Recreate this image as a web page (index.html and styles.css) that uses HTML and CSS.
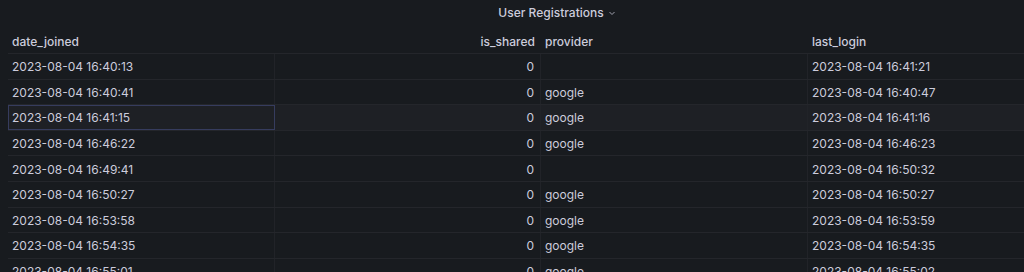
FILE: index.html
```html
<!DOCTYPE html>
<html lang="en">
<head>
    <meta charset="UTF-8">
    <title>User Registrations</title>
    <link rel="stylesheet" href="styles.css">
</head>
<body>
    <div class="panel">
        <div class="panel-title">
            <span>User Registrations</span>
            <svg class="chevron" width="8" height="8" viewBox="0 0 8 8"><path d="M1.5 3 L4 5.5 L6.5 3" fill="none" stroke="#9fa0ad" stroke-width="1"/></svg>
        </div>
        <div class="table">
            <div class="row head">
                <div class="cell">date_joined</div>
                <div class="cell num">is_shared</div>
                <div class="cell">provider</div>
                <div class="cell">last_login</div>
            </div>
            <div class="row">
                <div class="cell">2023-08-04 16:40:13</div>
                <div class="cell num">0</div>
                <div class="cell"></div>
                <div class="cell">2023-08-04 16:41:21</div>
            </div>
            <div class="row">
                <div class="cell">2023-08-04 16:40:41</div>
                <div class="cell num">0</div>
                <div class="cell">google</div>
                <div class="cell">2023-08-04 16:40:47</div>
            </div>
            <div class="row hover">
                <div class="cell focus">2023-08-04 16:41:15</div>
                <div class="cell num">0</div>
                <div class="cell">google</div>
                <div class="cell">2023-08-04 16:41:16</div>
            </div>
            <div class="row">
                <div class="cell">2023-08-04 16:46:22</div>
                <div class="cell num">0</div>
                <div class="cell">google</div>
                <div class="cell">2023-08-04 16:46:23</div>
            </div>
            <div class="row">
                <div class="cell">2023-08-04 16:49:41</div>
                <div class="cell num">0</div>
                <div class="cell"></div>
                <div class="cell">2023-08-04 16:50:32</div>
            </div>
            <div class="row">
                <div class="cell">2023-08-04 16:50:27</div>
                <div class="cell num">0</div>
                <div class="cell">google</div>
                <div class="cell">2023-08-04 16:50:27</div>
            </div>
            <div class="row">
                <div class="cell">2023-08-04 16:53:58</div>
                <div class="cell num">0</div>
                <div class="cell">google</div>
                <div class="cell">2023-08-04 16:53:59</div>
            </div>
            <div class="row">
                <div class="cell">2023-08-04 16:54:35</div>
                <div class="cell num">0</div>
                <div class="cell">google</div>
                <div class="cell">2023-08-04 16:54:35</div>
            </div>
            <div class="row">
                <div class="cell">2023-08-04 16:55:01</div>
                <div class="cell num">0</div>
                <div class="cell">google</div>
                <div class="cell">2023-08-04 16:55:02</div>
            </div>
        </div>
    </div>
</body>
</html>
```

FILE: styles.css
```css
body {
    margin: 0;
    background-color: #181b1f;
    color: #ccccdc;
    font-family: Inter, "Noto Sans", sans-serif;
    font-size: 12px;
    height: 272px;
    overflow: hidden;
}
.panel {
    width: 1024px;
    overflow: hidden;
}
.panel-title {
    height: 24px;
    display: flex;
    align-items: center;
    justify-content: center;
    gap: 4px;
    font-weight: 500;
    padding-left: 90px;
}
.chevron {
    margin-top: 1px;
}
.table {
    margin-left: 8px;
    margin-top: 4px;
    width: 1066px;
}
.row {
    display: grid;
    grid-template-columns: 267px 266px 267px 266px;
    height: 25.6px;
    border-bottom: 1px solid #24262b;
    box-sizing: border-box;
}
.row.head {
    height: 26px;
    font-weight: 500;
    padding-top: 1px;
}
.row.hover {
    background-color: #1e2025;
}
.cell {
    display: flex;
    align-items: center;
    padding: 1px 5px 0 4px;
    border-right: 1px solid #212328;
    white-space: nowrap;
    box-sizing: border-box;
}
.head .cell {
    border-right: none;
}
.cell.num {
    justify-content: flex-end;
    padding-right: 6px;
}
.cell.focus {
    outline: 1px solid #363c5e;
    outline-offset: -1px;
}
```
